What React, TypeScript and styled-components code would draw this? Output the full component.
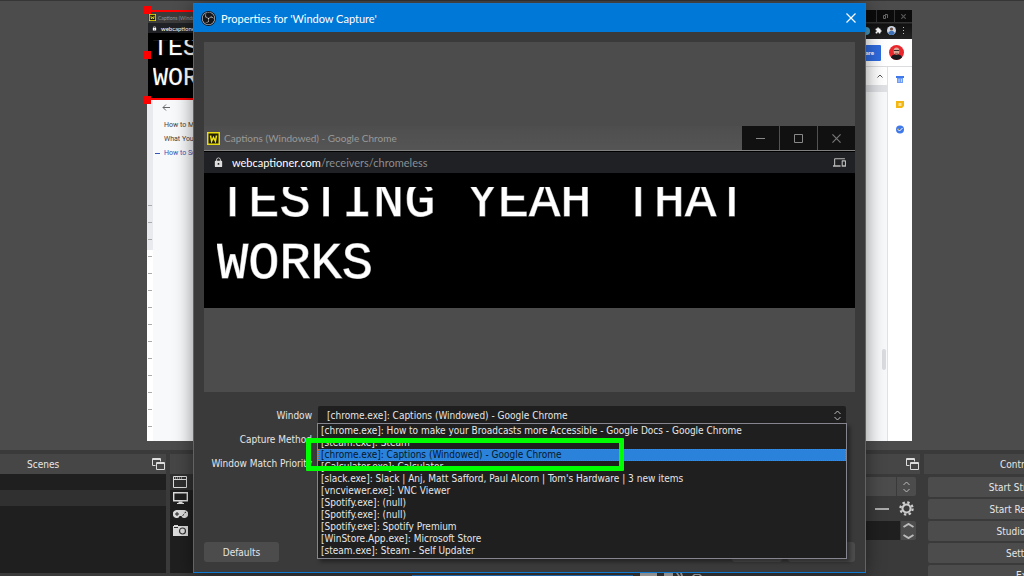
import React from "react";
import styled, { createGlobalStyle } from "styled-components";
import { MdLock, MdDevices, MdExtension } from "react-icons/md";
import { SiObsstudio } from "react-icons/si";

const ui = `Lato, "Open Sans", sans-serif`;
const qt = `"DejaVu Sans Condensed", "DejaVu Sans", sans-serif`;

const Global = createGlobalStyle`
  * { box-sizing: border-box; }
  body { margin: 0; background: #3a3a3a; color: #e6e6e6; font: 10px ${qt}; }
  button, select { font: inherit; color: inherit; border: 0; margin: 0; padding: 0; }
  h2, p, ul { margin: 0; padding: 0; font-weight: normal; }
  svg { display: block; flex: none; }
`;

const Desktop = styled.div`
  position: relative;
  display: flex;
  flex-direction: column;
  height: 100vh;
  overflow: hidden;
`;

/* Main preview */
const Stage = styled.main`
  flex: 1;
  min-height: 0;
  display: flex;
  background: #4c4c4c;
  border-top: 1px solid #363636;
  padding: 9px 112px 9px 147px;
`;
const Scene = styled.div`
  position: relative;
  flex: 1;
  display: flex;
  justify-content: space-between;
  background: #f8f9fa;
`;
const LeftPane = styled.div`
  width: 200px;
  display: flex;
  flex-direction: column;
`;
const Source = styled.div`
  height: 90px;
  display: flex;
  flex-direction: column;
  background: #000;
  border: 1px solid #f00;
  border-width: 2px 1px;
`;
const SourceTitle = styled.div`
  height: 11px;
  display: flex;
  align-items: center;
  gap: 2px;
  padding-left: 1px;
  background: #3c3c3c;
  color: #999;
  font: 5px ${ui};
`;
const SourceUrl = styled.div`
  height: 10px;
  display: flex;
  align-items: center;
  gap: 4px;
  padding-left: 4px;
  background: #202124;
  color: #fff;
  font: 6px ${ui};
`;
const SourceCaptions = styled.div`
  padding: 7px 5px 0;
`;
const Handle = styled.span<{ $top: number }>`
  position: absolute;
  left: -4px;
  top: ${(p) => p.$top}px;
  width: 8px;
  height: 8px;
  background: #f00;
`;
const Captions = styled.p<{ $size: number; $line: number; $height: number }>`
  display: flex;
  flex-direction: column;
  justify-content: flex-end;
  height: ${(p) => p.$height}px;
  overflow: hidden;
  color: #fff;
  font: ${(p) => p.$size}px/${(p) => p.$line}px "Liberation Mono", monospace;
  -webkit-text-stroke: 1px rgba(255, 255, 255, ${(p) => (p.$size > 30 ? 0.6 : 0.2)});
  white-space: pre;
`;
const Doc = styled.div`
  flex: 1;
  display: flex;
`;
const Ruler = styled.div`
  width: 6px;
  background:
    repeating-linear-gradient(#0000 0 15px, #aaa 15px 16px, #0000 16px 17px) 1px 90px / 4px 100% no-repeat,
    linear-gradient(#e8eaed 150px, #fff 150px);
`;
const Outline = styled.div`
  flex: 1;
  display: flex;
  flex-direction: column;
  padding: 2px 0 0 2px;
  font: 7px/14px Roboto, sans-serif;
`;
const OutlineItem = styled.a<{ $active?: boolean }>`
  display: flex;
  align-items: center;
  padding-left: ${(p) => (p.$active ? 0 : 9)}px;
  gap: 4px;
  color: ${(p) => (p.$active ? "#3457b8" : "#444")};
  text-decoration: none;
  &::before {
    content: "";
    display: ${(p) => (p.$active ? "block" : "none")};
    width: 5px;
    height: 1px;
    background: currentColor;
  }
`;
const OutlineBack = styled.div`
  padding: 2px 0 7px 7px;
`;
const RightPane = styled.div`
  width: 80px;
  display: flex;
  flex-direction: column;
`;
const MiniTitle = styled.div`
  height: 12px;
  display: flex;
  justify-content: flex-end;
  gap: 1px;
  background: #333;
`;
const MiniButton = styled.span`
  width: 17px;
  display: grid;
  place-items: center;
  background: #0b0b0b;
`;
const MiniBar = styled.div`
  height: 17px;
  display: flex;
  align-items: center;
  justify-content: flex-end;
  gap: 5px;
  padding-right: 6px;
  background: linear-gradient(#333 0 1px, #111 2px, #222);
`;
const MiniHeader = styled.div`
  height: 28px;
  display: flex;
  align-items: center;
  justify-content: flex-end;
  gap: 8px;
  padding-right: 8px;
  background: #fff;
  border-bottom: 1px solid #dadce0;
`;
const Share = styled.button`
  width: 44px;
  height: 16px;
  padding-right: 7px;
  text-align: right;
  background: #2f6be0;
  border-radius: 1px;
  color: #fff;
  font: bold 6px Roboto, sans-serif;
`;
const PageBody = styled.div`
  flex: 1;
  display: flex;
`;
const PageScroll = styled.div`
  flex: 1;
  display: flex;
  flex-direction: column;
  align-items: flex-end;
  border-right: 1px solid #e0e2e6;
  background: linear-gradient(#fff 18px, #dfe1e5 18px 25px, #f8f9fa 25px);
`;
const ScrollChevron = styled.div`
  height: 18px;
  padding: 7px 4px 0 0;
`;
const ScrollThumb = styled.div`
  width: 4px;
  height: 21px;
  margin: 264px 1px 0 0;
  border-radius: 2px;
  background: #dadce0;
`;
const SideBar = styled.div`
  width: 24px;
  display: flex;
  flex-direction: column;
  align-items: center;
  gap: 16px;
  padding-top: 8px;
  background: #fff;
`;

/* Docks */
const Docks = styled.div`
  height: 126px;
  display: flex;
  gap: 4px;
  margin-right: -101px;
  padding-top: 4px;
  background: #3a3a3a;
`;
const Dock = styled.section<{ $width?: number }>`
  flex: ${(p) => (p.$width ? `0 0 ${p.$width}px` : "1")};
  display: flex;
  flex-direction: column;
  min-width: 0;
`;
const DockTitle = styled.h2<{ $align?: string }>`
  height: 20px;
  flex: none;
  display: flex;
  align-items: center;
  justify-content: ${(p) => p.$align || "space-between"};
  padding-right: ${(p) => (p.$align === "center" ? 12 : 1)}px;
  background: #464646;
  font-size: 10px;
`;
const SceneLabel = styled.span`
  padding-left: 27px;
`;
const List = styled.ul`
  height: 99px;
  list-style: none;
  background: #1f1f1f;
`;
const ListRow = styled.li<{ $selected?: boolean }>`
  height: 16px;
  display: flex;
  align-items: center;
  padding-left: 3px;
  background: ${(p) => (p.$selected ? "#303030" : "transparent")};
`;
const Mixer = styled.div`
  flex: 1;
  display: flex;
  align-items: flex-end;
  gap: 7px;
  padding-left: 2px;
`;
const Level = styled.div`
  flex: 1;
  height: 1px;
  background: #1f7ad0;
`;
const Transition = styled.div`
  display: flex;
  flex-direction: column;
  gap: 3px;
  padding: 3px 4px 0 0;
`;
const TransitionRow = styled.div`
  height: 19px;
  display: flex;
  align-items: center;
  justify-content: flex-end;
  gap: 1px;
`;
const ToolRow = styled(TransitionRow)`
  gap: 10px;
  padding-right: 2px;
`;
const Field = styled.div<{ $dark?: boolean }>`
  flex: 1;
  height: 19px;
  background: ${(p) => (p.$dark ? "#1f1f1f" : "#4c4c4c")};
`;
const Spin = styled.button`
  width: 19px;
  height: 19px;
  display: grid;
  place-items: center;
  background: #4c4c4c;
  border-radius: 0 2px 2px 0;
`;
const StackSpin = styled(Spin)`
  width: 15px;
`;
const Controls = styled.div`
  display: flex;
  flex-direction: column;
  gap: 2px;
  padding: 3px 4px 0;
`;
const ControlButton = styled.button`
  height: 20px;
  flex: none;
  background: #4c4c4c;
  border-radius: 2px;
`;

/* Dialog */
const Dialog = styled.div`
  position: absolute;
  left: 193px;
  right: 158px;
  top: 3px;
  height: 570px;
  display: flex;
  flex-direction: column;
  background: #3a3a3a;
  border: 1px solid #0f78d0;
  box-shadow: 0 2px 18px rgba(0, 0, 0, 0.45);
`;
const TitleBar = styled.header`
  height: 28px;
  flex: none;
  display: flex;
  align-items: center;
  gap: 5px;
  padding: 0 9px 0 7px;
  background: #0078d7;
  color: #fff;
`;
const TitleText = styled.h2`
  flex: 1;
  font: 11px ${ui};
`;
const Logo = styled.span`
  padding: 1px;
  border-radius: 50%;
  background: #15161a;
`;
const IconButton = styled.button`
  background: none;
`;
const Content = styled.div`
  flex: 1;
  display: flex;
  flex-direction: column;
  padding: 10px;
`;
const Preview = styled.div`
  height: 350px;
  flex: none;
  padding-top: 84px;
  background: #4c4c4c;
`;
const ChromeTitle = styled.div`
  height: 25px;
  display: flex;
  align-items: stretch;
  gap: 1px;
  background: linear-gradient(#4e4e4e, #555);
  border-bottom: 1px solid #808080;
  color: #999;
  font: 10px ${ui};
`;
const ChromeName = styled.span`
  flex: 1;
  display: flex;
  align-items: center;
  gap: 4px;
  padding-left: 3px;
`;
const ChromeButton = styled.button`
  width: 37px;
  display: grid;
  place-items: center;
  background: #111;
  color: #777;
`;
const UrlBar = styled.div`
  height: 22px;
  display: flex;
  align-items: center;
  padding: 0 9px;
  background: #202124;
  border-top: 1px solid #000;
  color: #8c8f93;
  font: 11px ${ui};
`;
const Url = styled.span`
  flex: 1;
  padding-left: 8px;
`;
const Host = styled.span`
  color: #fff;
`;
const CaptionPane = styled.div`
  height: 135px;
  padding: 14px 13px;
  background: #000;
`;
const Form = styled.form`
  position: relative;
  flex: 1;
  display: grid;
  grid-template-columns: 108px 1fr;
  grid-auto-rows: 18px;
  gap: 6px;
  padding: 14px 9px 0 0;
  align-items: center;
`;
const Label = styled.label`
  text-align: right;
  white-space: nowrap;
`;
const SelectWrap = styled.div`
  position: relative;
  height: 18px;
`;
const Select = styled.select`
  appearance: none;
  width: 100%;
  height: 18px;
  padding-left: 9px;
  background: #1f1f1f;
  border-radius: 2px;
`;
const Arrows = styled.span`
  position: absolute;
  right: 5px;
  top: 4px;
  pointer-events: none;
`;
const Popup = styled.ul`
  position: absolute;
  left: 113px;
  right: 8px;
  top: 31px;
  z-index: 1;
  padding: 1px 0;
  list-style: none;
  background: #1f1f1f;
  border: 1px solid #85858f;
  box-shadow: 3px 3px 4px rgba(0, 0, 0, 0.4);
`;
const Option = styled.li<{ $selected: boolean }>`
  height: 12px;
  padding-left: 3px;
  line-height: 12px;
  white-space: pre;
  color: ${(p) => (p.$selected ? "#06182c" : "#e6e6e6")};
  background: ${(p) => (p.$selected ? "#2a82da" : "transparent")};
  outline: ${(p) => (p.$selected ? "1px dotted #b07040" : "none")};
  outline-offset: -1px;
`;
const Marker = styled.div`
  position: absolute;
  left: 102px;
  top: 46px;
  z-index: 2;
  width: 318px;
  height: 33px;
  border: 5px solid #0f0;
  border-radius: 1px;
`;
const Footer = styled.footer`
  display: flex;
  gap: 6px;
`;
const Push = styled.button<{ $width: number; $end?: boolean }>`
  width: ${(p) => p.$width}px;
  height: 20px;
  margin-left: ${(p) => (p.$end ? "auto" : "0")};
  background: #4c4c4c;
  border-radius: 3px;
`;

const Badge = ({ size }: { size: number }) => (
  <svg width={size} height={size} viewBox="0 0 13 13">
    <rect width="13" height="13" fill="#e8dc10" />
    <rect x="1.5" y="1.5" width="10" height="10" fill="#222004" />
    <path d="M3.5 3.5 4.6 9.3 6.5 5.5 8.4 9.3 9.5 3.5" fill="none" stroke="#f0e414" strokeWidth="1.5" />
  </svg>
);
const Popout = () => (
  <svg width="13" height="12" viewBox="0 0 13 12" fill="none" stroke="#ddd">
    <path d="M3.5 7.500h-3v-7h8v3M0 1.500h9" />
    <path d="M4.500 4.500h8v7h-8zM4 5.500h9" />
  </svg>
);
const UpDown = ({ h, w = 7, stroke = 1 }: { h: number; w?: number; stroke?: number }) => (
  <svg width={w} height={h} viewBox={`0 0 ${w} ${h}`} fill="none" stroke="#bbb" strokeWidth={stroke}>
    <path d={`M.5 4 ${w / 2} 1 ${w - 0.5} 4M.5 ${h - 4} ${w / 2} ${h - 1} ${w - 0.5} ${h - 4}`} />
  </svg>
);
const Cross = ({ size, color }: { size: number; color: string }) => (
  <svg width={size} height={size} viewBox="0 0 10 10" stroke={color} strokeWidth={12 / size}>
    <path d="M.5.5l9 9M9.500.5l-9 9" />
  </svg>
);
const Gear = () => (
  <svg width="15" height="15" viewBox="0 0 16 16" fill="none" stroke="#ccc">
    <circle cx="8" cy="8" r="4.300" strokeWidth="2.200" />
    <circle cx="8" cy="8" r="6.500" strokeWidth="2.400" strokeDasharray="2.550 2.555" />
  </svg>
);

const options = [
  "[chrome.exe]: How to make your Broadcasts more Accessible - Google Docs - Google Chrome",
  "[steam.exe]: Steam",
  "[chrome.exe]: Captions (Windowed) - Google Chrome",
  "[Calculator.exe]: Calculator",
  "[slack.exe]: Slack | Anj, Matt Safford, Paul Alcorn | Tom's Hardware | 3 new items",
  "[vncviewer.exe]: VNC Viewer",
  "[Spotify.exe]: (null)",
  "[Spotify.exe]: (null)",
  "[Spotify.exe]: Spotify Premium",
  "[WinStore.App.exe]: Microsoft Store",
  "[steam.exe]: Steam - Self Updater",
];
const selected = 2;

export default function App() {
  return (
    <Desktop>
      <Global />
      <Stage>
        <Scene>
          <LeftPane>
            <Source>
              <SourceTitle><Badge size={7} />Captions (Windowed)</SourceTitle>
              <SourceUrl><MdLock size={5} />webcaptioner.com</SourceUrl>
              <SourceCaptions>
                <Captions $size={25} $line={30} $height={54}><span>TESTING</span><span>WORKS</span></Captions>
              </SourceCaptions>
            </Source>
            <Doc>
              <Ruler />
              <Outline>
                <OutlineBack>
                  <svg width="8" height="7" viewBox="0 0 8 7" fill="none" stroke="#666"><path d="M8 3.500H1M4 .5l-3 3 3 3" /></svg>
                </OutlineBack>
                <OutlineItem href="#make">How to Make</OutlineItem>
                <OutlineItem href="#need">What You Need</OutlineItem>
                <OutlineItem href="#setup" $active>How to Set Up</OutlineItem>
              </Outline>
            </Doc>
          </LeftPane>
          <RightPane>
            <MiniTitle>
              <MiniButton />
              <MiniButton><svg width="5" height="5" viewBox="0 0 5 5" fill="none" stroke="#666"><path d="M.5 1.500v3h2v-3zM2 .5h2.500V4" /></svg></MiniButton>
              <MiniButton><Cross size={5} color="#555" /></MiniButton>
            </MiniTitle>
            <MiniBar>
              <svg width="8" height="8"><circle cx="4" cy="4" r="4" fill="#4c9cc0" /></svg>
              <MdExtension size={7} color="#fff" />
              <svg width="9" height="9" viewBox="0 0 9 9"><circle cx="4.500" cy="4.500" r="4.500" fill="#cfd8e4" /><path d="M1 7a4 4 0 0 0 7 0L6 5H3z" fill="#3f74b8" /><circle cx="4.500" cy="3" r="1.600" fill="#6b5148" /></svg>
              <svg width="5" height="7" fill="#bbb"><path d="M2 0h1v1H2zM2 3h1v1H2zM2 6h1v1H2z" /></svg>
            </MiniBar>
            <MiniHeader>
              <Share type="button">Share</Share>
              <svg width="15" height="15" viewBox="0 0 15 15"><circle cx="7.500" cy="7.500" r="7.500" fill="#e8262c" /><path d="M2 12.500c1-3 3-3 5.500-3s4.500 0 5.500 3a7.500 7.500 0 0 1-11 0z" fill="#16181c" /><ellipse cx="7.500" cy="6" rx="2.900" ry="3.600" fill="#d8a898" /><path d="M4.800 5.500h5.400" stroke="#3a2c2c" /><path d="M6 8.300h3" stroke="#8a6458" /></svg>
            </MiniHeader>
            <PageBody>
              <PageScroll>
                <ScrollChevron><svg width="6" height="4" viewBox="0 0 6 4" fill="none" stroke="#555"><path d="M.5 3.500 3 1l2.500 2.500" /></svg></ScrollChevron>
                <ScrollThumb />
              </PageScroll>
              <SideBar>
                <svg width="8" height="9" viewBox="0 0 8 9"><path fill="#3f78ea" d="M0 1h8v2H0z" /><path fill="#6f9cf4" d="M1 3h6v5H1z" /><path stroke="#fff" d="M3 4v3M5.500 4v3" strokeWidth=".6" /></svg>
                <svg width="8" height="9" viewBox="0 0 8 9"><path fill="#f4b610" d="M0 1h8v5L6 8H0z" /><path fill="#fbe29a" d="M2.500 3h3v3h-3z" /></svg>
                <svg width="8" height="9" viewBox="0 0 8 9"><circle cx="4" cy="4.500" r="4" fill="#3f78ea" /><path d="M2 4.500 3.500 6 6.500 3" stroke="#fff" fill="none" /><circle cx="2" cy="4.300" r=".8" fill="#f4b610" /></svg>
              </SideBar>
            </PageBody>
          </RightPane>
          <Handle $top={-4} />
          <Handle $top={41} />
          <Handle $top={86} />
        </Scene>
      </Stage>

      <Docks>
        <Dock $width={166}>
          <DockTitle><SceneLabel>Scenes</SceneLabel><Popout /></DockTitle>
          <List><ListRow /><ListRow $selected /></List>
        </Dock>
        <Dock $width={236}>
          <DockTitle />
          <List>
            <ListRow $selected><svg width="14" height="12" viewBox="0 0 14 12" fill="none" stroke="#ddd"><path d="M.5.5h13v11H.5zM1 3.500h12" /><path d="M2 2h7" strokeDasharray="1 1" /></svg></ListRow>
            <ListRow><svg width="15" height="12" viewBox="0 0 15 12"><path d="M.7.7h13.600v8H.7z" fill="none" stroke="#ddd" strokeWidth="1.400" /><path d="M5.500 9.500h4V11h1.500v1h-7v-1h1.500z" fill="#ddd" /></svg></ListRow>
            <ListRow><svg width="15" height="8" viewBox="0 0 15 8"><path fill="#ddd" d="M4 0h7a4 4 0 1 1-2 7.300L8.500 6h-2L6 7.300A4 4 0 1 1 4 0z" /><path stroke="#222" d="M2 4h4M4 2v4M9.500 5.500l1.500-1M11.500 3l1.500-1" /></svg></ListRow>
            <ListRow><svg width="15" height="11" viewBox="0 0 15 11"><path fill="#ddd" d="M1 0h4v1h10v10H0V1h1z" /><circle cx="9.500" cy="6" r="3" fill="none" stroke="#333" strokeWidth="1.200" /><path stroke="#333" d="M1 2.500h4" /></svg></ListRow>
          </List>
        </Dock>
        <Dock>
          <DockTitle />
          <Mixer>
            <Level />
            <svg width="62" height="3" viewBox="0 0 62 3" fill="#bbb"><path d="M0 0h17v3H0zM24 0h9v3h-9zM36 0h2l2 3h-2zM40 0h2l1 3h-2zM52 3l2-2h6l2 2h-2l-1-1h-4l-1 1z" /></svg>
          </Mixer>
        </Dock>
        <Dock $width={214}>
          <DockTitle $align="flex-end"><Popout /></DockTitle>
          <Transition>
            <TransitionRow><Field /><Spin type="button" aria-label="Transition"><UpDown h={12} /></Spin></TransitionRow>
            <ToolRow>
              <svg width="14" height="2"><path fill="#aaa" d="M0 0h14v2H0z" /></svg>
              <Gear />
            </ToolRow>
            <TransitionRow><Field $dark /><StackSpin type="button" aria-label="Duration"><UpDown h={16} w={11} stroke={2} /></StackSpin></TransitionRow>
          </Transition>
        </Dock>
        <Dock $width={201}>
          <DockTitle $align="center">Controls</DockTitle>
          <Controls>
            {["Start Streaming", "Start Recording", "Studio Mode", "Settings", "Exit"].map((t) => (
              <ControlButton key={t} type="button">{t}</ControlButton>
            ))}
          </Controls>
        </Dock>
      </Docks>

      <Dialog role="dialog" aria-labelledby="title">
        <TitleBar>
          <Logo><SiObsstudio size={13} color="#ddd" /></Logo>
          <TitleText id="title">Properties for 'Window Capture'</TitleText>
          <IconButton type="button" aria-label="Close"><Cross size={10} color="#fff" /></IconButton>
        </TitleBar>
        <Content>
          <Preview>
            <ChromeTitle>
              <ChromeName><Badge size={13} />Captions (Windowed) - Google Chrome</ChromeName>
              <ChromeButton type="button" aria-label="Minimize"><svg width="9" height="1"><path fill="#888" d="M0 0h9v1H0z" /></svg></ChromeButton>
              <ChromeButton type="button" aria-label="Maximize"><svg width="9" height="9" fill="none" stroke="#888"><path d="M.5.5h8v8h-8z" /></svg></ChromeButton>
              <ChromeButton type="button" aria-label="Close tab"><Cross size={9} color="#777" /></ChromeButton>
            </ChromeTitle>
            <UrlBar>
              <MdLock size={11} color="#ddd" />
              <Url><Host>webcaptioner.com</Host>/receivers/chromeless</Url>
              <MdDevices size={13} color="#bbb" />
            </UrlBar>
            <CaptionPane>
              <Captions $size={52} $line={62} $height={109}><span>TESTING YEAH THAT</span><span>WORKS</span></Captions>
            </CaptionPane>
          </Preview>
          <Form>
            <Label htmlFor="window">Window</Label>
            <SelectWrap>
              <Select id="window" defaultValue={selected}>
                {options.map((o, i) => <option key={i} value={i}>{o}</option>)}
              </Select>
              <Arrows><UpDown h={11} /></Arrows>
            </SelectWrap>
            <Label htmlFor="method">Capture Method</Label>
            <Select id="method" />
            <Label htmlFor="priority">Window Match Priority</Label>
            <Select id="priority" />
            <Popup role="listbox" aria-label="Window">
              {options.map((o, i) => (
                <Option key={i} role="option" aria-selected={i === selected} $selected={i === selected}>{o}</Option>
              ))}
            </Popup>
            <Marker />
          </Form>
          <Footer>
            <Push type="button" $width={75}>Defaults</Push>
            <Push type="button" $width={50} $end>OK</Push>
            <Push type="button" $width={67}>Cancel</Push>
          </Footer>
        </Content>
      </Dialog>
    </Desktop>
  );
}
